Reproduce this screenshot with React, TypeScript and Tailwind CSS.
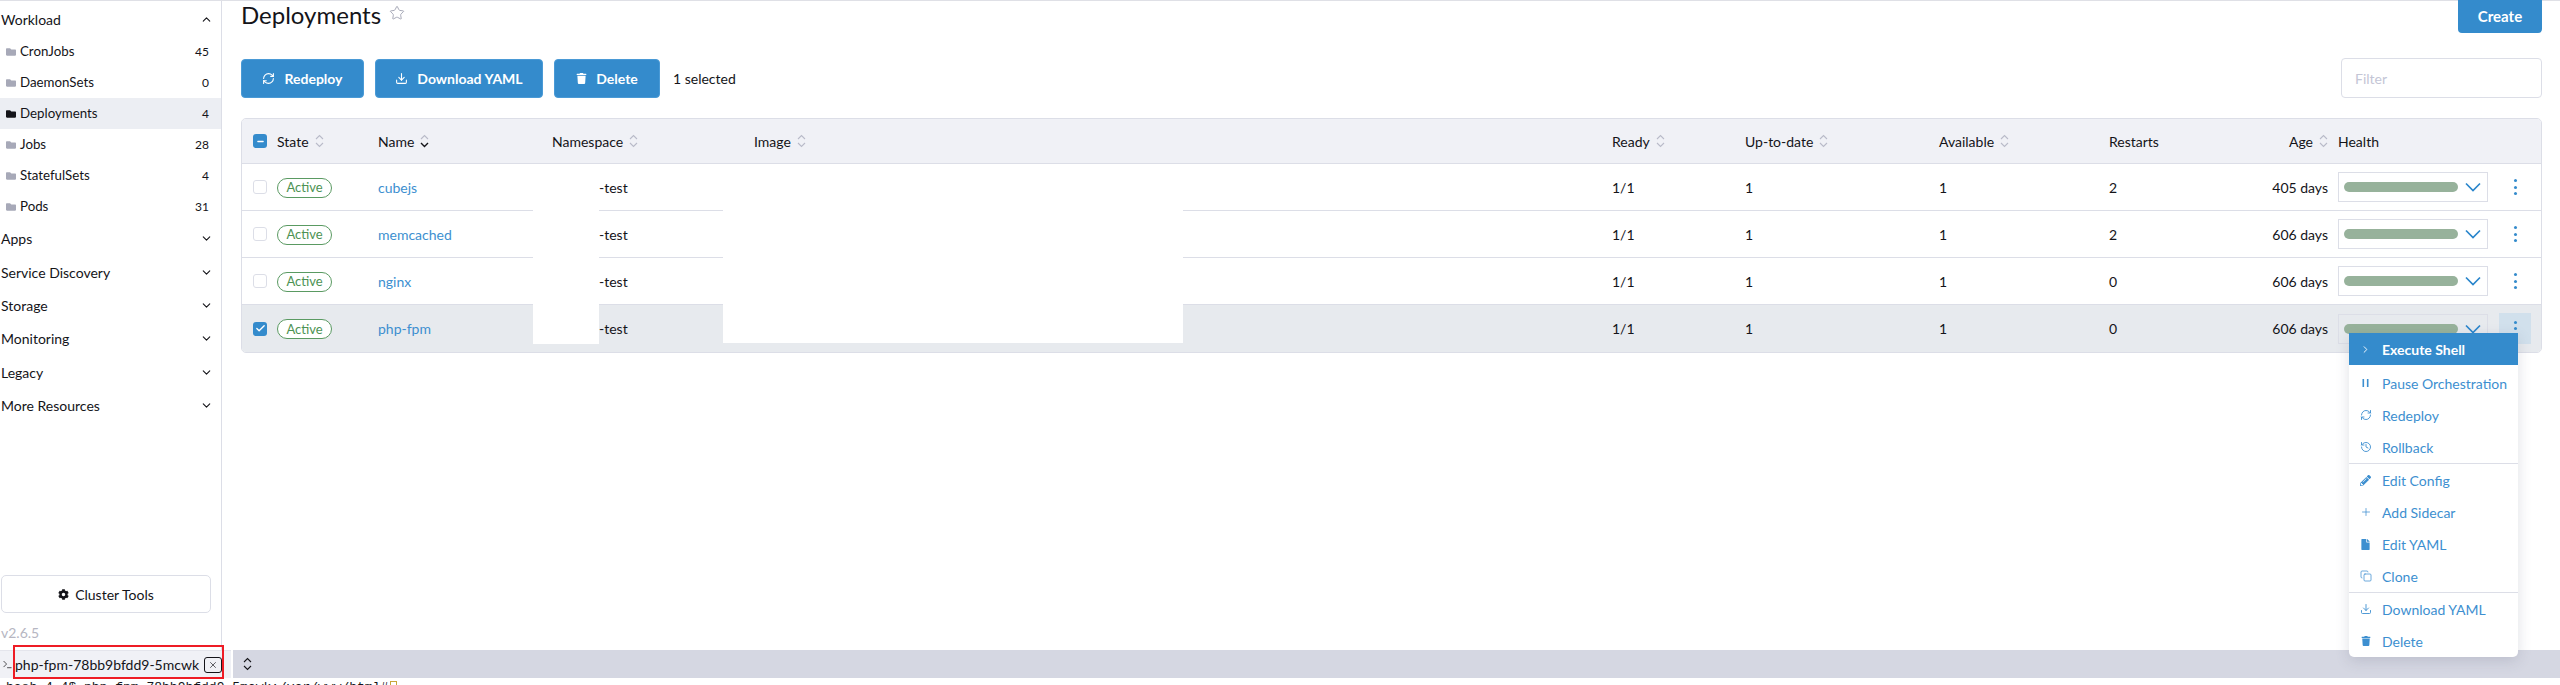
import React from "react";
import { RefreshCw, Download, Star, X, Plus, History, ChevronUp, ChevronDown, ChevronRight, Terminal, Copy, Check, Minus } from "lucide-react";
import { FaTrash, FaCog, FaFolder, FaPencilAlt, FaFile } from "react-icons/fa";

const Sort = ({ dark = false }: { dark?: boolean }) => (
  <svg width="9" height="14" viewBox="0 0 9 14" fill="none" className="ml-[6px] shrink-0">
    <path d="M1 5 L4.5 1.5 L8 5" stroke="#b9bbc9" strokeWidth="1.1" />
    <path d="M1 9 L4.5 12.5 L8 9" stroke={dark ? "#141419" : "#b9bbc9"} strokeWidth={dark ? 1.4 : 1.1} />
  </svg>
);

const Group = ({ label, open = false }: { label: string; open?: boolean }) => (
  <div className="h-[33.3px] flex items-center justify-between pl-px pr-[8px] text-[14px] text-[#141419]">
    <span>{label}</span>
    {open ? <ChevronUp size={13} strokeWidth={2} /> : <ChevronDown size={13} strokeWidth={2} />}
  </div>
);

const Item = ({ label, count, active = false }: { label: string; count: string; active?: boolean }) => (
  <div className={`h-[31px] flex items-center justify-between pl-[6px] pr-[12px] text-[13.3px] text-[#141419] ${active ? "bg-[#eceef3]" : ""}`}>
    <span className="flex items-center">
      <FaFolder size={10} className={`mr-[4px] ${active ? "text-[#141419]" : "text-[#a7a9b8]"}`} />
      {label}
    </span>
    <span className="text-[12px]">{count}</span>
  </div>
);

const gridCols = "grid grid-cols-[35px_101px_174px_202px_858px_133px_194px_170px_100px_129px_150px_1fr] items-center";

const headers: [string, boolean, boolean][] = [
  ["State", true, false],
  ["Name", true, true],
  ["Namespace", true, false],
  ["Image", true, false],
  ["Ready", true, false],
  ["Up-to-date", true, false],
  ["Available", true, false],
  ["Restarts", false, false],
];

const rows = [
  { name: "cubejs", restarts: "2", age: "405 days" },
  { name: "memcached", restarts: "2", age: "606 days" },
  { name: "nginx", restarts: "0", age: "606 days" },
  { name: "php-fpm", restarts: "0", age: "606 days", selected: true },
];

const Btn = ({ icon, label, w }: { icon: React.ReactNode; label: string; w: string }) => (
  <button className={`${w} h-[39px] rounded-[4px] bg-[#348bcc] border border-[#4a9ad6] text-white text-[14px] font-bold flex items-center justify-center`}>
    {icon}
    <span className="ml-[9px]">{label}</span>
  </button>
);

const Row = ({ r, last }: { r: (typeof rows)[number]; last: boolean }) => (
  <div className={`${gridCols} h-[47px] text-[14px] text-[#141419] ${r.selected ? "bg-[#e7eaee]" : "bg-white"} ${last ? "" : "border-b border-[#dcdee7]"}`}>
    <div className="pl-[11px]">
      {r.selected ? (
        <div className="w-[14px] h-[14px] rounded-[3px] bg-[#348bcc] flex items-center justify-center">
          <Check size={11} strokeWidth={3} className="text-white" />
        </div>
      ) : (
        <div className="w-[14px] h-[14px] rounded-[3px] border border-[#dcdee7] bg-white" />
      )}
    </div>
    <div>
      <span className="inline-flex items-center justify-center w-[55px] h-[20px] rounded-[10px] border border-[#5a9a62] text-[#4d9253] text-[13px] bg-white">Active</span>
    </div>
    <div className="text-[#3d8fd0]">{r.name}</div>
    <div className="pl-[47px]">-test</div>
    <div />
    <div>1/1</div>
    <div>1</div>
    <div>1</div>
    <div>{r.restarts}</div>
    <div className="text-right pr-[10px]">{r.age}</div>
    <div className="h-[30px] border border-[#dcdee7] flex items-center pl-[5px]">
      <div className="w-[114px] h-[10px] rounded-[5px] bg-[#97b29b]" />
      <svg width="16" height="10" viewBox="0 0 16 10" fill="none" className="ml-[7px]">
        <path d="M1 1.5 L8 8.5 L15 1.5" stroke="#2b86cc" strokeWidth="1.7" />
      </svg>
    </div>
    <div className="pl-[11px]">
      <div className={`w-[32px] h-[31px] flex flex-col items-center justify-center gap-[3.5px] ${r.selected ? "bg-[#d1e0ec]" : ""}`}>
        <span className="w-[3px] h-[3px] rounded-full bg-[#348bcc]" />
        <span className="w-[3px] h-[3px] rounded-full bg-[#348bcc]" />
        <span className="w-[3px] h-[3px] rounded-full bg-[#348bcc]" />
      </div>
    </div>
  </div>
);

const MenuItem = ({ icon, label, active = false }: { icon: React.ReactNode; label: string; active?: boolean }) => (
  <div className={`h-[32px] flex items-center ${active ? "bg-[#348bcc] text-white font-bold" : "text-[#3d8fd0]"}`}>
    <span className="w-[33px] flex justify-center">{icon}</span>
    <span>{label}</span>
  </div>
);

export default function App() {
  return (
    <div className="relative h-[685px] w-[2560px] overflow-hidden bg-white flex flex-col font-['Lato',sans-serif] text-[#141419]">
      <div className="flex flex-1 min-h-0 border-t border-[#dfe0e6]">
        <aside className="w-[222px] shrink-0 border-r border-[#dcdee7] flex flex-col pt-[2px]">
          <Group label="Workload" open />
          <Item label="CronJobs" count="45" />
          <Item label="DaemonSets" count="0" />
          <Item label="Deployments" count="4" active />
          <Item label="Jobs" count="28" />
          <Item label="StatefulSets" count="4" />
          <Item label="Pods" count="31" />
          <Group label="Apps" />
          <Group label="Service Discovery" />
          <Group label="Storage" />
          <Group label="Monitoring" />
          <Group label="Legacy" />
          <Group label="More Resources" />
          <div className="mt-auto pl-px pr-[10px] pb-[9px]">
            <button className="w-full h-[38px] rounded-[5px] border border-[#dcdee7] text-[14px] flex items-center justify-center gap-[6px]">
              <FaCog size={11} />
              Cluster Tools
            </button>
            <div className="mt-[11px] text-[14px] leading-[17px] text-[#b6b6c2]">v2.6.5</div>
          </div>
        </aside>
        <main className="flex-1 min-w-0 pl-[19px] pr-[18px]">
          <div className="h-[32px] flex justify-between">
            <h1 className="flex items-start text-[24px] leading-[28px] text-[#141419]">
              Deployments
              <Star size={16} strokeWidth={1.5} className="ml-[8px] mt-[4px] text-[#a9abb9]" />
            </h1>
            <button className="w-[84px] h-[33px] -mt-px rounded-b-[4px] bg-[#348bcc] text-white text-[15px] font-bold">Create</button>
          </div>
          <div className="mt-[26px] h-[39px] flex items-center">
            <div className="flex items-center gap-[11px]">
              <Btn w="w-[123px]" label="Redeploy" icon={<RefreshCw size={13} strokeWidth={2} />} />
              <Btn w="w-[168px]" label="Download YAML" icon={<Download size={13} strokeWidth={2} />} />
              <Btn w="w-[106px]" label="Delete" icon={<FaTrash size={11} />} />
            </div>
            <span className="ml-[13px] text-[14px]">1 selected</span>
            <div className="ml-auto self-end w-[201px] h-[40px] rounded-[4px] border border-[#dcdee7] flex items-center pl-[13px] text-[14px] text-[#c4c6d6]">Filter</div>
          </div>
          <div className="relative mt-[20px] rounded-[5px] border border-[#dcdee7] overflow-hidden">
            <div className={`${gridCols} h-[45px] bg-[#f0f1f6] border-b border-[#dcdee7] text-[14px] text-[#141419]`}>
              <div className="pl-[11px]">
                <div className="w-[14px] h-[14px] rounded-[3px] bg-[#348bcc] flex items-center justify-center">
                  <Minus size={9} strokeWidth={3.5} className="text-white" />
                </div>
              </div>
              {headers.map(([h, sort, dark]) => (
                <div key={h} className="flex items-center">
                  {h}
                  {sort && <Sort dark={dark} />}
                </div>
              ))}
              <div className="flex items-center justify-end pr-[10px]">
                Age
                <Sort />
              </div>
              <div>Health</div>
              <div />
            </div>
            {rows.map((r, i) => (
              <Row key={r.name} r={r} last={i === rows.length - 1} />
            ))}
            <div className="absolute left-[291px] top-[45px] w-[66px] h-[180px] bg-white" />
            <div className="absolute left-[481px] top-[45px] w-[460px] h-[179px] bg-white" />
          </div>
        </main>
      </div>
      <div className="h-[28px] shrink-0 flex">
        <div className="w-[231px] bg-[#f0f1f6] flex items-center border-t border-[#e4e5ec]">
          <Terminal size={11} strokeWidth={1.6} className="ml-[2px] mr-[2px] shrink-0" />
          <span className="text-[14px] whitespace-nowrap">php-fpm-78bb9bfdd9-5mcwk</span>
          <span className="ml-[5px] w-[18px] h-[16px] rounded-[3px] border border-[#141419] flex items-center justify-center">
            <X size={10} strokeWidth={1.6} />
          </span>
        </div>
        <div className="ml-[2px] flex-1 bg-[#d5d7e2] flex items-center pl-[10px]">
          <svg width="9" height="14" viewBox="0 0 9 14" fill="none">
            <path d="M1 5 L4.5 1.5 L8 5" stroke="#141419" strokeWidth="1.1" />
            <path d="M1 9 L4.5 12.5 L8 9" stroke="#141419" strokeWidth="1.1" />
          </svg>
        </div>
      </div>
      <div className="h-[7px] shrink-0 overflow-hidden flex pl-[6px]">
        <span className="mt-[2px] font-['Liberation_Mono',monospace] text-[13px] leading-[15px] whitespace-pre">bash-4.4$ php-fpm-78bb9bfdd9-5mcwk:/var/www/html# </span>
        <span className="ml-[-6px] mt-[3px] w-[7px] h-[15px] border border-[#c9a63c]" />
      </div>
      <div className="absolute left-[13px] top-[645px] w-[211px] h-[34px] border-2 border-[#ee1c25]" />
      <div className="absolute left-[2349px] top-[333px] w-[169px] bg-white rounded-b-[5px] shadow-[0_4px_14px_rgba(80,85,110,0.18)] text-[14px]">
        <MenuItem active label="Execute Shell" icon={<ChevronRight size={11} strokeWidth={2} />} />
        <div className="pt-px border-t border-white" />
        <MenuItem
          label="Pause Orchestration"
          icon={
            <svg width="7" height="10" viewBox="0 0 7 10" fill="currentColor">
              <rect x="0.5" y="1" width="1.6" height="8" />
              <rect x="4.9" y="1" width="1.6" height="8" />
            </svg>
          }
        />
        <MenuItem label="Redeploy" icon={<RefreshCw size={12} strokeWidth={1.8} />} />
        <MenuItem label="Rollback" icon={<History size={12} strokeWidth={1.8} />} />
        <div className="border-t border-[#dcdee7]" />
        <MenuItem label="Edit Config" icon={<FaPencilAlt size={11} />} />
        <MenuItem label="Add Sidecar" icon={<Plus size={12} strokeWidth={1.5} />} />
        <MenuItem label="Edit YAML" icon={<FaFile size={11} />} />
        <MenuItem label="Clone" icon={<Copy size={12} strokeWidth={1.5} />} />
        <div className="border-t border-[#dcdee7]" />
        <MenuItem label="Download YAML" icon={<Download size={12} strokeWidth={1.8} />} />
        <MenuItem label="Delete" icon={<FaTrash size={10} />} />
      </div>
    </div>
  );
}
